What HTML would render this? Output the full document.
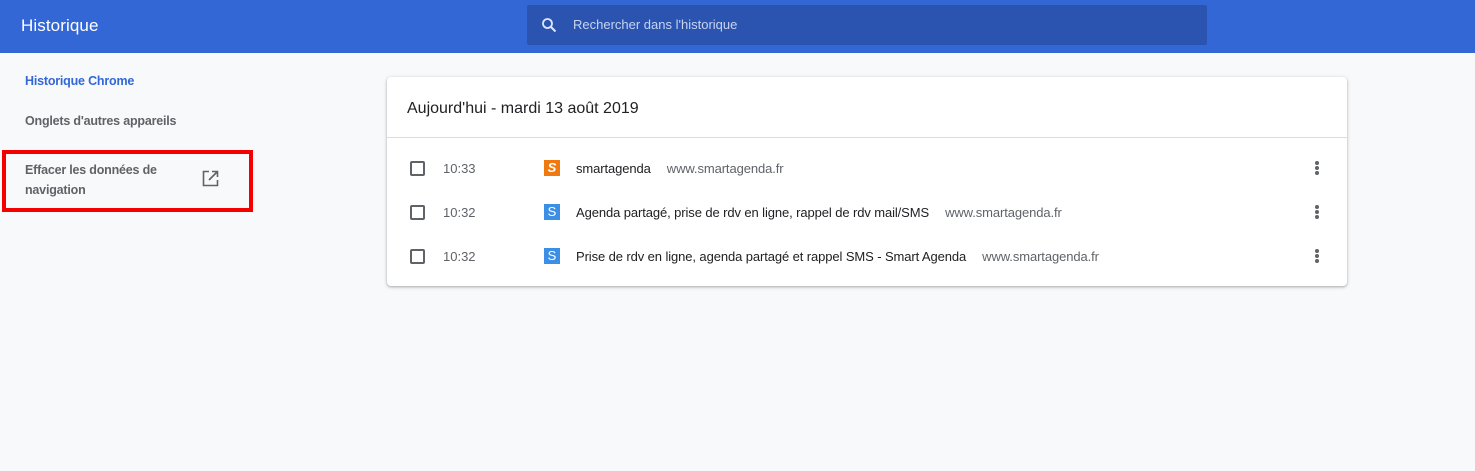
<!DOCTYPE html>
<html><head><meta charset="utf-8"><style>
*{margin:0;padding:0;box-sizing:border-box}
body{width:1475px;height:471px;background:#f8f9fa;font-family:"Liberation Sans",sans-serif;position:relative;overflow:hidden;color:#202124}
.top{position:absolute;left:0;top:0;width:1475px;height:53px;background:#3367d6}
.top h1{position:absolute;left:21px;top:16px;font-size:17px;color:#fff;font-weight:normal;letter-spacing:0.1px}
.search{position:absolute;left:527px;top:5px;width:680px;height:40px;background:#2a54b0;border-radius:2px}
.search span{position:absolute;left:46px;top:12px;font-size:13px;color:#c8d4ef}
.side{position:absolute;font-size:12.5px;font-weight:bold;color:#5f6368;letter-spacing:-0.2px}
.box{position:absolute;left:2px;top:150px;width:251px;height:62px;border:4px solid #f40000}
.card{position:absolute;left:387px;top:77px;width:960px;height:209px;background:#fff;border-radius:4px;box-shadow:0 1px 2px rgba(60,64,67,.3),0 1px 3px 1px rgba(60,64,67,.12)}
.card h2{position:absolute;left:20px;top:23px;font-size:16px;font-weight:normal;color:#202124}
.hr{position:absolute;left:0;top:60px;width:960px;height:1px;background:#dadce0}
.row{position:absolute;left:0;width:960px;height:44px}
.cb{position:absolute;left:23px;top:15px;width:15px;height:15px;border:2px solid #5f6368;border-radius:2px}
.t{position:absolute;left:56px;top:15px;font-size:13px;color:#5f6368}
.fav{position:absolute;left:157px;top:14px;width:16px;height:16px;color:#fff;font-weight:bold;font-size:13px;text-align:center;line-height:16px}
.ti{position:absolute;left:189px;top:15px;font-size:13px;color:#202124;white-space:nowrap;letter-spacing:-0.1px}
.ti i{font-style:normal;color:#5f6368;margin-left:16px}
.dots{position:absolute;left:928px;top:15px;width:4px}
.dots b{display:block;width:4px;height:4px;border-radius:2px;background:#5f6368;margin-bottom:1px}
</style></head><body>
<div class="top"><h1>Historique</h1>
<div class="search"><svg style="position:absolute;left:14px;top:12px" width="16" height="16" viewBox="0 0 16 16"><circle cx="6.5" cy="6.5" r="4.5" fill="none" stroke="#dfe6f6" stroke-width="1.8"/><path d="M10 10l4.5 4.5" stroke="#dfe6f6" stroke-width="2"/></svg><span>Rechercher dans l'historique</span></div></div>
<div class="side" style="left:25px;top:74px;color:#3367d6">Historique Chrome</div>
<div class="side" style="left:25px;top:114px">Onglets d'autres appareils</div>
<div class="side" style="left:25px;top:160px;line-height:20px">Effacer les données de<br>navigation</div>
<svg style="position:absolute;left:202px;top:170px" width="17" height="17" viewBox="0 0 17 17"><path d="M7 1.5H1.5v14h14V10" fill="none" stroke="#5f6368" stroke-width="1.6"/><path d="M10 1.5h5.5V7M15.5 1.5L7 10" fill="none" stroke="#5f6368" stroke-width="1.6"/></svg>
<div class="box"></div>
<div class="card"><h2>Aujourd'hui - mardi 13 août 2019</h2><div class="hr"></div>
<div class="row" style="top:69px"><div class="cb"></div><div class="t">10:33</div><div class="fav" style="background:#f07a10;font-style:italic">S</div><div class="ti">smartagenda<i>www.smartagenda.fr</i></div><div class="dots"><b></b><b></b><b></b></div></div>
<div class="row" style="top:113px"><div class="cb"></div><div class="t">10:32</div><div class="fav" style="background:#3d8fe6;font-weight:normal">S</div><div class="ti">Agenda partagé, prise de rdv en ligne, rappel de rdv mail/SMS<i>www.smartagenda.fr</i></div><div class="dots"><b></b><b></b><b></b></div></div>
<div class="row" style="top:157px"><div class="cb"></div><div class="t">10:32</div><div class="fav" style="background:#3d8fe6;font-weight:normal">S</div><div class="ti">Prise de rdv en ligne, agenda partagé et rappel SMS - Smart Agenda<i>www.smartagenda.fr</i></div><div class="dots"><b></b><b></b><b></b></div></div>
</div>
</body></html>
